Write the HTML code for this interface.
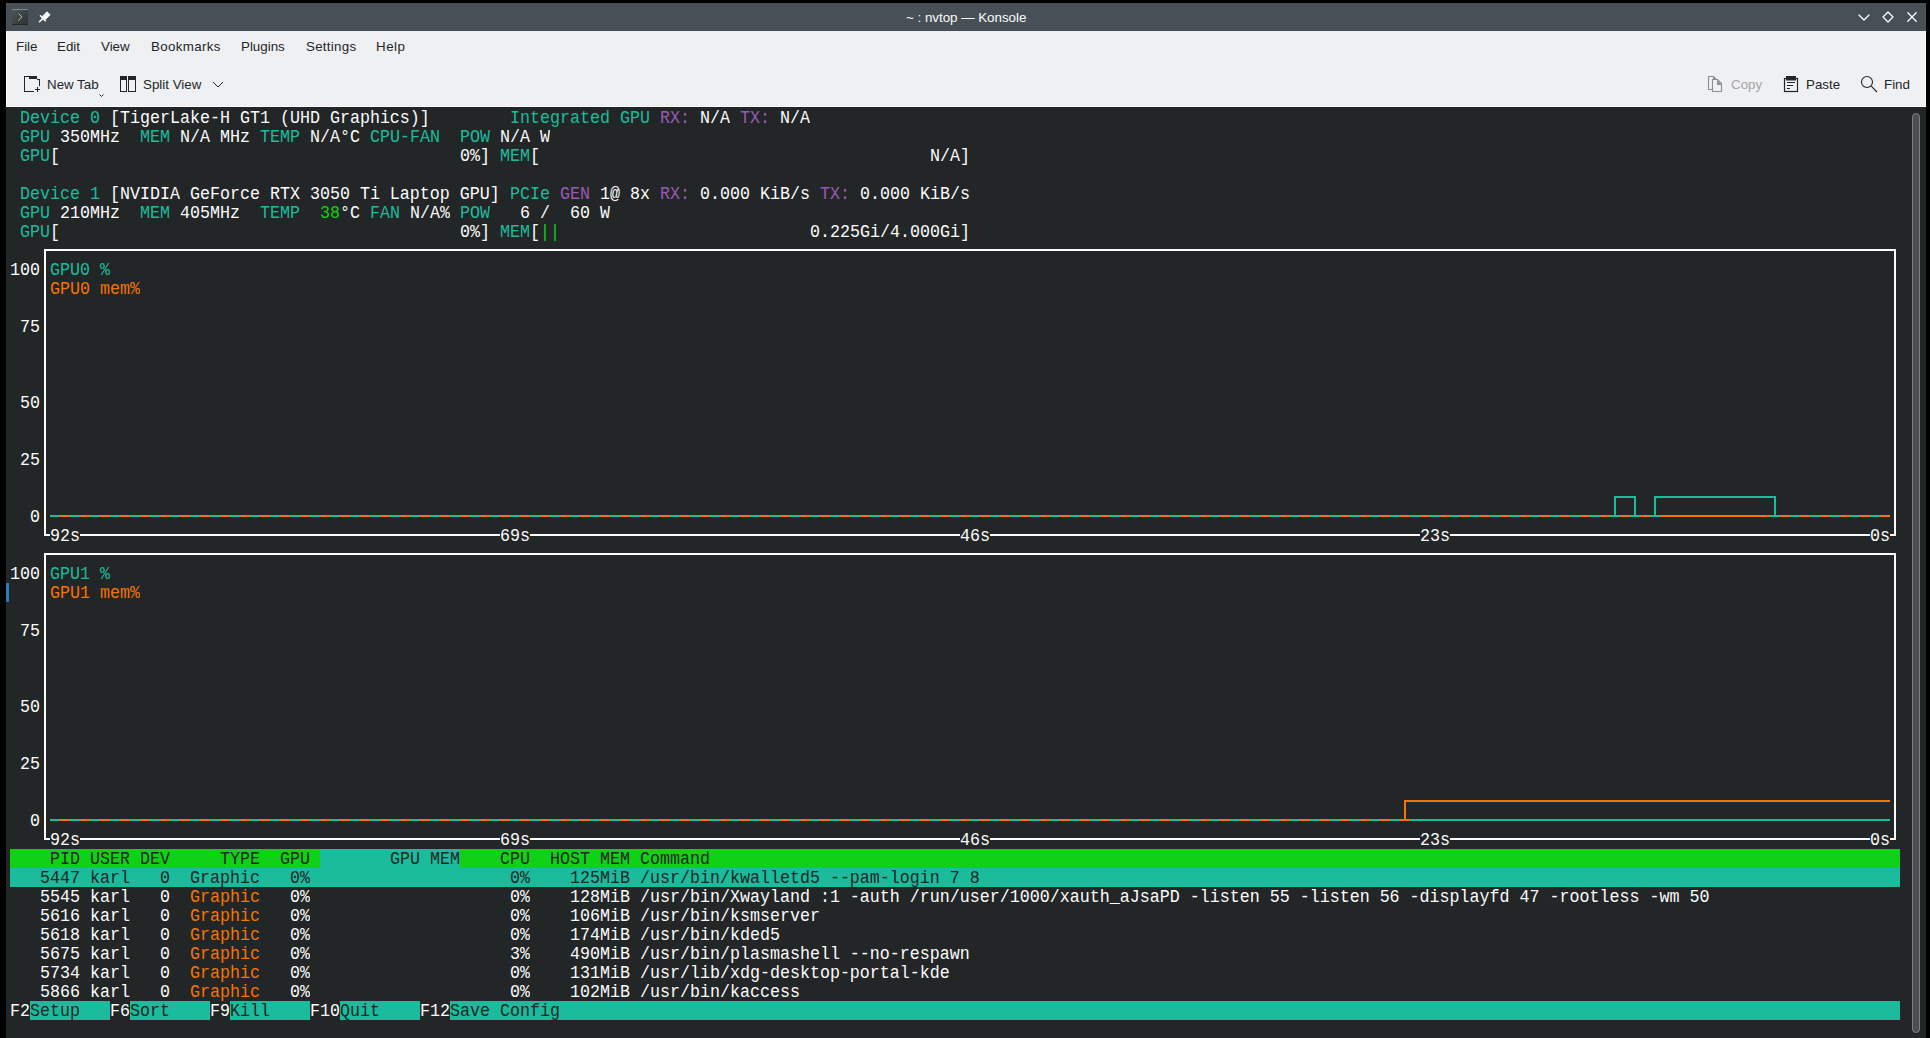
<!DOCTYPE html>
<html><head><meta charset="utf-8"><title>nvtop — Konsole</title>
<style>
html,body{margin:0;padding:0;}
body{width:1930px;height:1038px;overflow:hidden;background:#000;position:relative;font-family:"Liberation Sans",sans-serif;}
.b{position:absolute;}
.t{position:absolute;height:19px;font-family:"Liberation Mono",monospace;font-size:16.67px;line-height:19px;white-space:pre;transform:scaleY(1.09);transform-origin:0 3px;}
.ui{position:absolute;font-family:"Liberation Sans",sans-serif;font-size:13.33px;line-height:16px;white-space:pre;color:#232629;}
#title{position:absolute;left:6px;top:3px;width:1920px;height:28px;background:#475057;}
#bar{position:absolute;left:6px;top:31px;width:1920px;height:76px;background:#eff0f1;}
#term{position:absolute;left:6px;top:107px;width:1920px;height:931px;background:#232627;}
svg{position:absolute;overflow:visible;}
</style></head><body>
<div id="title"></div>
<div id="bar"></div>
<div id="term"></div>
<!-- title bar -->
<div class="ui" style="left:906px;top:10px;color:#fcfcfc;">~ : nvtop — Konsole</div>
<!-- menu -->
<div class="ui" style="left:16px;top:39px;">File</div>
<div class="ui" style="left:57px;top:39px;">Edit</div>
<div class="ui" style="left:101px;top:39px;">View</div>
<div class="ui" style="left:151px;top:39px;letter-spacing:0.35px;">Bookmarks</div>
<div class="ui" style="left:241px;top:39px;">Plugins</div>
<div class="ui" style="left:306px;top:39px;letter-spacing:0.28px;">Settings</div>
<div class="ui" style="left:376px;top:39px;letter-spacing:0.5px;">Help</div>
<!-- toolbar -->
<div class="ui" style="left:47px;top:77px;">New Tab</div>
<div class="ui" style="left:143px;top:77px;">Split View</div>
<div class="ui" style="left:1731px;top:77px;color:#a5a6a8;">Copy</div>
<div class="ui" style="left:1806px;top:77px;">Paste</div>
<div class="ui" style="left:1884px;top:77px;">Find</div>
<!-- highlights -->
<div class="b" style="left:6px;top:31px;width:1px;height:76px;background:#fcfcfc"></div>
<div class="b" style="left:1925px;top:31px;width:1px;height:76px;background:#fcfcfc"></div>
<div class="b" style="left:6px;top:106px;width:1920px;height:1px;background:#fcfcfc"></div>
<!-- konsole icon -->
<div class="b" style="left:12px;top:9px;width:16px;height:16px;background:linear-gradient(135deg,#4f5856,#2c3032)"></div>
<svg style="left:0;top:0" width="1930" height="110" viewBox="0 0 1930 110">
<rect x="12" y="9" width="16" height="1" fill="#7f8c8d"/>
<rect x="12" y="24" width="16" height="1" fill="#232627"/>
<path d="M18.5 13.5 L21.8 16.8 L18.5 20.5" fill="none" stroke="#b8c0c0" stroke-width="1"/>
<!-- pin -->
<path d="M42.5 16.3 L47 11.8 L50 14.8 L45.5 19.3 Z" fill="#fcfcfc" stroke="#fcfcfc" stroke-width="1" stroke-linejoin="round"/>
<path d="M40.5 15.8 L45.3 20.6" stroke="#fcfcfc" stroke-width="1.6" stroke-linecap="round"/>
<path d="M39.5 21.8 L43.2 18.1" stroke="#fcfcfc" stroke-width="1.5" stroke-linecap="round"/>
<!-- window buttons -->
<path d="M1859 15 L1864 20 L1869 15" fill="none" stroke="#fcfcfc" stroke-width="1.3" stroke-linecap="round"/>
<path d="M1888 12 L1893 17 L1888 22 L1883 17 Z" fill="none" stroke="#fcfcfc" stroke-width="1.3" stroke-linejoin="round"/>
<path d="M1907.8 12.8 L1916.2 21.2 M1916.2 12.8 L1907.8 21.2" fill="none" stroke="#fcfcfc" stroke-width="1.3" stroke-linecap="round"/>
<!-- new tab icon -->
<g fill="#232629">
<rect x="24" y="76" width="1" height="16"/><rect x="24" y="76" width="13" height="1"/>
<rect x="29" y="76" width="8" height="3"/><rect x="37" y="79" width="3" height="1"/><rect x="39" y="79" width="1" height="7"/>
<rect x="24" y="91" width="10" height="1"/>
<rect x="35" y="89" width="5" height="1"/><rect x="37" y="87" width="1" height="5"/>
</g>
<path d="M99.5 94.5 L101.5 96.5 L103.5 94.5" fill="none" stroke="#232629" stroke-width="1"/>
<!-- split view icon -->
<g fill="none" stroke="#232629" stroke-width="1">
<rect x="120.5" y="76.5" width="6" height="15"/><rect x="128.5" y="76.5" width="7" height="15"/>
</g>
<g fill="#232629"><rect x="120" y="76" width="7" height="4"/><rect x="128" y="76" width="8" height="4"/></g>
<path d="M213 82 L218 87 L223 82" fill="none" stroke="#232629" stroke-width="1"/>
<!-- copy icon (disabled) -->
<g fill="none" stroke="#8e8f90" stroke-width="1.1">
<path d="M1712 89.5 H1708.5 V76.5 H1713.5 L1716.5 79.5"/>
<path d="M1712.5 91.5 V79.5 H1717.5 L1721.5 83.5 V91.5 Z"/>
</g>
<path d="M1713 76 L1716.8 79.8 L1713 79.8 Z" fill="#8e8f90"/>
<path d="M1717 80 L1722 85 L1717 85 Z" fill="#8e8f90"/>
<!-- paste icon -->
<rect x="1784.5" y="78.5" width="13" height="13" fill="none" stroke="#232629" stroke-width="1.2"/>
<rect x="1786" y="76" width="10" height="4.5" fill="#232629"/>
<g fill="#232629"><rect x="1787" y="82" width="8" height="1"/><rect x="1787" y="85" width="6" height="1"/><rect x="1787" y="88" width="3" height="1"/></g>
<!-- find icon -->
<circle cx="1867" cy="82" r="5.5" fill="none" stroke="#232629" stroke-width="1.1"/>
<path d="M1871.2 86.2 L1877 92" stroke="#232629" stroke-width="1.1"/>
</svg>
<!-- scrollbar -->
<div class="b" style="left:1912px;top:113px;width:6px;height:918px;border:1px solid #7e8081;border-radius:4px;background:#4d4e51"></div>
<!-- blue marker -->
<div class="b" style="left:6px;top:583px;width:3px;height:19px;background:#2d7bbd"></div>
<div class="t" style="left:20px;top:108px;color:#1abc9c">Device 0</div><div class="t" style="left:110px;top:108px;color:#fcfcfc">[TigerLake-H GT1 (UHD Graphics)]</div><div class="t" style="left:510px;top:108px;color:#1abc9c">Integrated GPU</div><div class="t" style="left:660px;top:108px;color:#9b59b6">RX:</div><div class="t" style="left:700px;top:108px;color:#fcfcfc">N/A</div><div class="t" style="left:740px;top:108px;color:#9b59b6">TX:</div><div class="t" style="left:780px;top:108px;color:#fcfcfc">N/A</div><div class="t" style="left:20px;top:127px;color:#1abc9c">GPU</div><div class="t" style="left:60px;top:127px;color:#fcfcfc">350MHz</div><div class="t" style="left:140px;top:127px;color:#1abc9c">MEM</div><div class="t" style="left:180px;top:127px;color:#fcfcfc">N/A MHz</div><div class="t" style="left:260px;top:127px;color:#1abc9c">TEMP</div><div class="t" style="left:310px;top:127px;color:#fcfcfc">N/A°C</div><div class="t" style="left:370px;top:127px;color:#1abc9c">CPU-FAN</div><div class="t" style="left:460px;top:127px;color:#1abc9c">POW</div><div class="t" style="left:500px;top:127px;color:#fcfcfc">N/A W</div><div class="t" style="left:20px;top:146px;color:#1abc9c">GPU</div><div class="t" style="left:50px;top:146px;color:#fcfcfc">[</div><div class="t" style="left:460px;top:146px;color:#fcfcfc">0%]</div><div class="t" style="left:500px;top:146px;color:#1abc9c">MEM</div><div class="t" style="left:530px;top:146px;color:#fcfcfc">[</div><div class="t" style="left:930px;top:146px;color:#fcfcfc">N/A]</div><div class="t" style="left:20px;top:184px;color:#1abc9c">Device 1</div><div class="t" style="left:110px;top:184px;color:#fcfcfc">[NVIDIA GeForce RTX 3050 Ti Laptop GPU]</div><div class="t" style="left:510px;top:184px;color:#1abc9c">PCIe</div><div class="t" style="left:560px;top:184px;color:#9b59b6">GEN</div><div class="t" style="left:600px;top:184px;color:#fcfcfc">1@ 8x</div><div class="t" style="left:660px;top:184px;color:#9b59b6">RX:</div><div class="t" style="left:700px;top:184px;color:#fcfcfc">0.000 KiB/s</div><div class="t" style="left:820px;top:184px;color:#9b59b6">TX:</div><div class="t" style="left:860px;top:184px;color:#fcfcfc">0.000 KiB/s</div><div class="t" style="left:20px;top:203px;color:#1abc9c">GPU</div><div class="t" style="left:60px;top:203px;color:#fcfcfc">210MHz</div><div class="t" style="left:140px;top:203px;color:#1abc9c">MEM</div><div class="t" style="left:180px;top:203px;color:#fcfcfc">405MHz</div><div class="t" style="left:260px;top:203px;color:#1abc9c">TEMP</div><div class="t" style="left:320px;top:203px;color:#11d116">38</div><div class="t" style="left:340px;top:203px;color:#fcfcfc">°C</div><div class="t" style="left:370px;top:203px;color:#1abc9c">FAN</div><div class="t" style="left:410px;top:203px;color:#fcfcfc">N/A%</div><div class="t" style="left:460px;top:203px;color:#1abc9c">POW</div><div class="t" style="left:520px;top:203px;color:#fcfcfc">6 /  60 W</div><div class="t" style="left:20px;top:222px;color:#1abc9c">GPU</div><div class="t" style="left:50px;top:222px;color:#fcfcfc">[</div><div class="t" style="left:460px;top:222px;color:#fcfcfc">0%]</div><div class="t" style="left:500px;top:222px;color:#1abc9c">MEM</div><div class="t" style="left:530px;top:222px;color:#fcfcfc">[</div><div class="t" style="left:540px;top:222px;color:#11d116">||</div><div class="t" style="left:810px;top:222px;color:#fcfcfc">0.225Gi/4.000Gi]</div><div class="b" style="left:44px;top:249px;width:1852px;height:2px;background:#fcfcfc"></div><div class="b" style="left:44px;top:249px;width:2px;height:287px;background:#fcfcfc"></div><div class="b" style="left:1894px;top:249px;width:2px;height:287px;background:#fcfcfc"></div><div class="b" style="left:44px;top:534px;width:1852px;height:2px;background:#fcfcfc"></div><div class="b" style="left:50px;top:526px;width:30px;height:19px;background:#232627"></div><div class="t" style="left:50px;top:526px;color:#fcfcfc">92s</div><div class="b" style="left:500px;top:526px;width:30px;height:19px;background:#232627"></div><div class="t" style="left:500px;top:526px;color:#fcfcfc">69s</div><div class="b" style="left:960px;top:526px;width:30px;height:19px;background:#232627"></div><div class="t" style="left:960px;top:526px;color:#fcfcfc">46s</div><div class="b" style="left:1420px;top:526px;width:30px;height:19px;background:#232627"></div><div class="t" style="left:1420px;top:526px;color:#fcfcfc">23s</div><div class="b" style="left:1870px;top:526px;width:20px;height:19px;background:#232627"></div><div class="t" style="left:1870px;top:526px;color:#fcfcfc">0s</div><div class="t" style="left:10px;top:260px;color:#fcfcfc">100</div><div class="t" style="left:20px;top:317px;color:#fcfcfc">75</div><div class="t" style="left:20px;top:393px;color:#fcfcfc">50</div><div class="t" style="left:20px;top:450px;color:#fcfcfc">25</div><div class="t" style="left:30px;top:507px;color:#fcfcfc">0</div><div class="t" style="left:50px;top:260px;color:#1abc9c">GPU0 %</div><div class="t" style="left:50px;top:279px;color:#f67400">GPU0 mem%</div><div class="b" style="left:44px;top:553px;width:1852px;height:2px;background:#fcfcfc"></div><div class="b" style="left:44px;top:553px;width:2px;height:287px;background:#fcfcfc"></div><div class="b" style="left:1894px;top:553px;width:2px;height:287px;background:#fcfcfc"></div><div class="b" style="left:44px;top:838px;width:1852px;height:2px;background:#fcfcfc"></div><div class="b" style="left:50px;top:830px;width:30px;height:19px;background:#232627"></div><div class="t" style="left:50px;top:830px;color:#fcfcfc">92s</div><div class="b" style="left:500px;top:830px;width:30px;height:19px;background:#232627"></div><div class="t" style="left:500px;top:830px;color:#fcfcfc">69s</div><div class="b" style="left:960px;top:830px;width:30px;height:19px;background:#232627"></div><div class="t" style="left:960px;top:830px;color:#fcfcfc">46s</div><div class="b" style="left:1420px;top:830px;width:30px;height:19px;background:#232627"></div><div class="t" style="left:1420px;top:830px;color:#fcfcfc">23s</div><div class="b" style="left:1870px;top:830px;width:20px;height:19px;background:#232627"></div><div class="t" style="left:1870px;top:830px;color:#fcfcfc">0s</div><div class="t" style="left:10px;top:564px;color:#fcfcfc">100</div><div class="t" style="left:20px;top:621px;color:#fcfcfc">75</div><div class="t" style="left:20px;top:697px;color:#fcfcfc">50</div><div class="t" style="left:20px;top:754px;color:#fcfcfc">25</div><div class="t" style="left:30px;top:811px;color:#fcfcfc">0</div><div class="t" style="left:50px;top:564px;color:#1abc9c">GPU1 %</div><div class="t" style="left:50px;top:583px;color:#f67400">GPU1 mem%</div><div class="b" style="left:50px;top:515px;width:10px;height:2px;background:#1abc9c"></div><div class="b" style="left:60px;top:515px;width:10px;height:2px;background:#f67400"></div><div class="b" style="left:70px;top:515px;width:10px;height:2px;background:#1abc9c"></div><div class="b" style="left:80px;top:515px;width:10px;height:2px;background:#f67400"></div><div class="b" style="left:90px;top:515px;width:10px;height:2px;background:#1abc9c"></div><div class="b" style="left:100px;top:515px;width:10px;height:2px;background:#f67400"></div><div class="b" style="left:110px;top:515px;width:10px;height:2px;background:#1abc9c"></div><div class="b" style="left:120px;top:515px;width:10px;height:2px;background:#f67400"></div><div class="b" style="left:130px;top:515px;width:10px;height:2px;background:#1abc9c"></div><div class="b" style="left:140px;top:515px;width:10px;height:2px;background:#f67400"></div><div class="b" style="left:150px;top:515px;width:10px;height:2px;background:#1abc9c"></div><div class="b" style="left:160px;top:515px;width:10px;height:2px;background:#f67400"></div><div class="b" style="left:170px;top:515px;width:10px;height:2px;background:#1abc9c"></div><div class="b" style="left:180px;top:515px;width:10px;height:2px;background:#f67400"></div><div class="b" style="left:190px;top:515px;width:10px;height:2px;background:#1abc9c"></div><div class="b" style="left:200px;top:515px;width:10px;height:2px;background:#f67400"></div><div class="b" style="left:210px;top:515px;width:10px;height:2px;background:#1abc9c"></div><div class="b" style="left:220px;top:515px;width:10px;height:2px;background:#f67400"></div><div class="b" style="left:230px;top:515px;width:10px;height:2px;background:#1abc9c"></div><div class="b" style="left:240px;top:515px;width:10px;height:2px;background:#f67400"></div><div class="b" style="left:250px;top:515px;width:10px;height:2px;background:#1abc9c"></div><div class="b" style="left:260px;top:515px;width:10px;height:2px;background:#f67400"></div><div class="b" style="left:270px;top:515px;width:10px;height:2px;background:#1abc9c"></div><div class="b" style="left:280px;top:515px;width:10px;height:2px;background:#f67400"></div><div class="b" style="left:290px;top:515px;width:10px;height:2px;background:#1abc9c"></div><div class="b" style="left:300px;top:515px;width:10px;height:2px;background:#f67400"></div><div class="b" style="left:310px;top:515px;width:10px;height:2px;background:#1abc9c"></div><div class="b" style="left:320px;top:515px;width:10px;height:2px;background:#f67400"></div><div class="b" style="left:330px;top:515px;width:10px;height:2px;background:#1abc9c"></div><div class="b" style="left:340px;top:515px;width:10px;height:2px;background:#f67400"></div><div class="b" style="left:350px;top:515px;width:10px;height:2px;background:#1abc9c"></div><div class="b" style="left:360px;top:515px;width:10px;height:2px;background:#f67400"></div><div class="b" style="left:370px;top:515px;width:10px;height:2px;background:#1abc9c"></div><div class="b" style="left:380px;top:515px;width:10px;height:2px;background:#f67400"></div><div class="b" style="left:390px;top:515px;width:10px;height:2px;background:#1abc9c"></div><div class="b" style="left:400px;top:515px;width:10px;height:2px;background:#f67400"></div><div class="b" style="left:410px;top:515px;width:10px;height:2px;background:#1abc9c"></div><div class="b" style="left:420px;top:515px;width:10px;height:2px;background:#f67400"></div><div class="b" style="left:430px;top:515px;width:10px;height:2px;background:#1abc9c"></div><div class="b" style="left:440px;top:515px;width:10px;height:2px;background:#f67400"></div><div class="b" style="left:450px;top:515px;width:10px;height:2px;background:#1abc9c"></div><div class="b" style="left:460px;top:515px;width:10px;height:2px;background:#f67400"></div><div class="b" style="left:470px;top:515px;width:10px;height:2px;background:#1abc9c"></div><div class="b" style="left:480px;top:515px;width:10px;height:2px;background:#f67400"></div><div class="b" style="left:490px;top:515px;width:10px;height:2px;background:#1abc9c"></div><div class="b" style="left:500px;top:515px;width:10px;height:2px;background:#f67400"></div><div class="b" style="left:510px;top:515px;width:10px;height:2px;background:#1abc9c"></div><div class="b" style="left:520px;top:515px;width:10px;height:2px;background:#f67400"></div><div class="b" style="left:530px;top:515px;width:10px;height:2px;background:#1abc9c"></div><div class="b" style="left:540px;top:515px;width:10px;height:2px;background:#f67400"></div><div class="b" style="left:550px;top:515px;width:10px;height:2px;background:#1abc9c"></div><div class="b" style="left:560px;top:515px;width:10px;height:2px;background:#f67400"></div><div class="b" style="left:570px;top:515px;width:10px;height:2px;background:#1abc9c"></div><div class="b" style="left:580px;top:515px;width:10px;height:2px;background:#f67400"></div><div class="b" style="left:590px;top:515px;width:10px;height:2px;background:#1abc9c"></div><div class="b" style="left:600px;top:515px;width:10px;height:2px;background:#f67400"></div><div class="b" style="left:610px;top:515px;width:10px;height:2px;background:#1abc9c"></div><div class="b" style="left:620px;top:515px;width:10px;height:2px;background:#f67400"></div><div class="b" style="left:630px;top:515px;width:10px;height:2px;background:#1abc9c"></div><div class="b" style="left:640px;top:515px;width:10px;height:2px;background:#f67400"></div><div class="b" style="left:650px;top:515px;width:10px;height:2px;background:#1abc9c"></div><div class="b" style="left:660px;top:515px;width:10px;height:2px;background:#f67400"></div><div class="b" style="left:670px;top:515px;width:10px;height:2px;background:#1abc9c"></div><div class="b" style="left:680px;top:515px;width:10px;height:2px;background:#f67400"></div><div class="b" style="left:690px;top:515px;width:10px;height:2px;background:#1abc9c"></div><div class="b" style="left:700px;top:515px;width:10px;height:2px;background:#f67400"></div><div class="b" style="left:710px;top:515px;width:10px;height:2px;background:#1abc9c"></div><div class="b" style="left:720px;top:515px;width:10px;height:2px;background:#f67400"></div><div class="b" style="left:730px;top:515px;width:10px;height:2px;background:#1abc9c"></div><div class="b" style="left:740px;top:515px;width:10px;height:2px;background:#f67400"></div><div class="b" style="left:750px;top:515px;width:10px;height:2px;background:#1abc9c"></div><div class="b" style="left:760px;top:515px;width:10px;height:2px;background:#f67400"></div><div class="b" style="left:770px;top:515px;width:10px;height:2px;background:#1abc9c"></div><div class="b" style="left:780px;top:515px;width:10px;height:2px;background:#f67400"></div><div class="b" style="left:790px;top:515px;width:10px;height:2px;background:#1abc9c"></div><div class="b" style="left:800px;top:515px;width:10px;height:2px;background:#f67400"></div><div class="b" style="left:810px;top:515px;width:10px;height:2px;background:#1abc9c"></div><div class="b" style="left:820px;top:515px;width:10px;height:2px;background:#f67400"></div><div class="b" style="left:830px;top:515px;width:10px;height:2px;background:#1abc9c"></div><div class="b" style="left:840px;top:515px;width:10px;height:2px;background:#f67400"></div><div class="b" style="left:850px;top:515px;width:10px;height:2px;background:#1abc9c"></div><div class="b" style="left:860px;top:515px;width:10px;height:2px;background:#f67400"></div><div class="b" style="left:870px;top:515px;width:10px;height:2px;background:#1abc9c"></div><div class="b" style="left:880px;top:515px;width:10px;height:2px;background:#f67400"></div><div class="b" style="left:890px;top:515px;width:10px;height:2px;background:#1abc9c"></div><div class="b" style="left:900px;top:515px;width:10px;height:2px;background:#f67400"></div><div class="b" style="left:910px;top:515px;width:10px;height:2px;background:#1abc9c"></div><div class="b" style="left:920px;top:515px;width:10px;height:2px;background:#f67400"></div><div class="b" style="left:930px;top:515px;width:10px;height:2px;background:#1abc9c"></div><div class="b" style="left:940px;top:515px;width:10px;height:2px;background:#f67400"></div><div class="b" style="left:950px;top:515px;width:10px;height:2px;background:#1abc9c"></div><div class="b" style="left:960px;top:515px;width:10px;height:2px;background:#f67400"></div><div class="b" style="left:970px;top:515px;width:10px;height:2px;background:#1abc9c"></div><div class="b" style="left:980px;top:515px;width:10px;height:2px;background:#f67400"></div><div class="b" style="left:990px;top:515px;width:10px;height:2px;background:#1abc9c"></div><div class="b" style="left:1000px;top:515px;width:10px;height:2px;background:#f67400"></div><div class="b" style="left:1010px;top:515px;width:10px;height:2px;background:#1abc9c"></div><div class="b" style="left:1020px;top:515px;width:10px;height:2px;background:#f67400"></div><div class="b" style="left:1030px;top:515px;width:10px;height:2px;background:#1abc9c"></div><div class="b" style="left:1040px;top:515px;width:10px;height:2px;background:#f67400"></div><div class="b" style="left:1050px;top:515px;width:10px;height:2px;background:#1abc9c"></div><div class="b" style="left:1060px;top:515px;width:10px;height:2px;background:#f67400"></div><div class="b" style="left:1070px;top:515px;width:10px;height:2px;background:#1abc9c"></div><div class="b" style="left:1080px;top:515px;width:10px;height:2px;background:#f67400"></div><div class="b" style="left:1090px;top:515px;width:10px;height:2px;background:#1abc9c"></div><div class="b" style="left:1100px;top:515px;width:10px;height:2px;background:#f67400"></div><div class="b" style="left:1110px;top:515px;width:10px;height:2px;background:#1abc9c"></div><div class="b" style="left:1120px;top:515px;width:10px;height:2px;background:#f67400"></div><div class="b" style="left:1130px;top:515px;width:10px;height:2px;background:#1abc9c"></div><div class="b" style="left:1140px;top:515px;width:10px;height:2px;background:#f67400"></div><div class="b" style="left:1150px;top:515px;width:10px;height:2px;background:#1abc9c"></div><div class="b" style="left:1160px;top:515px;width:10px;height:2px;background:#f67400"></div><div class="b" style="left:1170px;top:515px;width:10px;height:2px;background:#1abc9c"></div><div class="b" style="left:1180px;top:515px;width:10px;height:2px;background:#f67400"></div><div class="b" style="left:1190px;top:515px;width:10px;height:2px;background:#1abc9c"></div><div class="b" style="left:1200px;top:515px;width:10px;height:2px;background:#f67400"></div><div class="b" style="left:1210px;top:515px;width:10px;height:2px;background:#1abc9c"></div><div class="b" style="left:1220px;top:515px;width:10px;height:2px;background:#f67400"></div><div class="b" style="left:1230px;top:515px;width:10px;height:2px;background:#1abc9c"></div><div class="b" style="left:1240px;top:515px;width:10px;height:2px;background:#f67400"></div><div class="b" style="left:1250px;top:515px;width:10px;height:2px;background:#1abc9c"></div><div class="b" style="left:1260px;top:515px;width:10px;height:2px;background:#f67400"></div><div class="b" style="left:1270px;top:515px;width:10px;height:2px;background:#1abc9c"></div><div class="b" style="left:1280px;top:515px;width:10px;height:2px;background:#f67400"></div><div class="b" style="left:1290px;top:515px;width:10px;height:2px;background:#1abc9c"></div><div class="b" style="left:1300px;top:515px;width:10px;height:2px;background:#f67400"></div><div class="b" style="left:1310px;top:515px;width:10px;height:2px;background:#1abc9c"></div><div class="b" style="left:1320px;top:515px;width:10px;height:2px;background:#f67400"></div><div class="b" style="left:1330px;top:515px;width:10px;height:2px;background:#1abc9c"></div><div class="b" style="left:1340px;top:515px;width:10px;height:2px;background:#f67400"></div><div class="b" style="left:1350px;top:515px;width:10px;height:2px;background:#1abc9c"></div><div class="b" style="left:1360px;top:515px;width:10px;height:2px;background:#f67400"></div><div class="b" style="left:1370px;top:515px;width:10px;height:2px;background:#1abc9c"></div><div class="b" style="left:1380px;top:515px;width:10px;height:2px;background:#f67400"></div><div class="b" style="left:1390px;top:515px;width:10px;height:2px;background:#1abc9c"></div><div class="b" style="left:1400px;top:515px;width:10px;height:2px;background:#f67400"></div><div class="b" style="left:1410px;top:515px;width:10px;height:2px;background:#1abc9c"></div><div class="b" style="left:1420px;top:515px;width:10px;height:2px;background:#f67400"></div><div class="b" style="left:1430px;top:515px;width:10px;height:2px;background:#1abc9c"></div><div class="b" style="left:1440px;top:515px;width:10px;height:2px;background:#f67400"></div><div class="b" style="left:1450px;top:515px;width:10px;height:2px;background:#1abc9c"></div><div class="b" style="left:1460px;top:515px;width:10px;height:2px;background:#f67400"></div><div class="b" style="left:1470px;top:515px;width:10px;height:2px;background:#1abc9c"></div><div class="b" style="left:1480px;top:515px;width:10px;height:2px;background:#f67400"></div><div class="b" style="left:1490px;top:515px;width:10px;height:2px;background:#1abc9c"></div><div class="b" style="left:1500px;top:515px;width:10px;height:2px;background:#f67400"></div><div class="b" style="left:1510px;top:515px;width:10px;height:2px;background:#1abc9c"></div><div class="b" style="left:1520px;top:515px;width:10px;height:2px;background:#f67400"></div><div class="b" style="left:1530px;top:515px;width:10px;height:2px;background:#1abc9c"></div><div class="b" style="left:1540px;top:515px;width:10px;height:2px;background:#f67400"></div><div class="b" style="left:1550px;top:515px;width:10px;height:2px;background:#1abc9c"></div><div class="b" style="left:1560px;top:515px;width:10px;height:2px;background:#f67400"></div><div class="b" style="left:1570px;top:515px;width:10px;height:2px;background:#1abc9c"></div><div class="b" style="left:1580px;top:515px;width:10px;height:2px;background:#f67400"></div><div class="b" style="left:1590px;top:515px;width:10px;height:2px;background:#1abc9c"></div><div class="b" style="left:1600px;top:515px;width:10px;height:2px;background:#f67400"></div><div class="b" style="left:1610px;top:515px;width:10px;height:2px;background:#1abc9c"></div><div class="b" style="left:1620px;top:515px;width:10px;height:2px;background:#f67400"></div><div class="b" style="left:1630px;top:515px;width:10px;height:2px;background:#1abc9c"></div><div class="b" style="left:1640px;top:515px;width:10px;height:2px;background:#f67400"></div><div class="b" style="left:1650px;top:515px;width:10px;height:2px;background:#1abc9c"></div><div class="b" style="left:1660px;top:515px;width:110px;height:2px;background:#f67400"></div><div class="b" style="left:1770px;top:515px;width:10px;height:2px;background:#1abc9c"></div><div class="b" style="left:1780px;top:515px;width:10px;height:2px;background:#f67400"></div><div class="b" style="left:1790px;top:515px;width:10px;height:2px;background:#1abc9c"></div><div class="b" style="left:1800px;top:515px;width:10px;height:2px;background:#f67400"></div><div class="b" style="left:1810px;top:515px;width:10px;height:2px;background:#1abc9c"></div><div class="b" style="left:1820px;top:515px;width:10px;height:2px;background:#f67400"></div><div class="b" style="left:1830px;top:515px;width:10px;height:2px;background:#1abc9c"></div><div class="b" style="left:1840px;top:515px;width:10px;height:2px;background:#f67400"></div><div class="b" style="left:1850px;top:515px;width:10px;height:2px;background:#1abc9c"></div><div class="b" style="left:1860px;top:515px;width:10px;height:2px;background:#f67400"></div><div class="b" style="left:1870px;top:515px;width:10px;height:2px;background:#1abc9c"></div><div class="b" style="left:1880px;top:515px;width:10px;height:2px;background:#f67400"></div><div class="b" style="left:1614px;top:496px;width:22px;height:2px;background:#1abc9c"></div><div class="b" style="left:1614px;top:496px;width:2px;height:21px;background:#1abc9c"></div><div class="b" style="left:1634px;top:496px;width:2px;height:21px;background:#1abc9c"></div><div class="b" style="left:1654px;top:496px;width:122px;height:2px;background:#1abc9c"></div><div class="b" style="left:1654px;top:496px;width:2px;height:21px;background:#1abc9c"></div><div class="b" style="left:1774px;top:496px;width:2px;height:21px;background:#1abc9c"></div><div class="b" style="left:50px;top:819px;width:10px;height:2px;background:#1abc9c"></div><div class="b" style="left:60px;top:819px;width:10px;height:2px;background:#f67400"></div><div class="b" style="left:70px;top:819px;width:10px;height:2px;background:#1abc9c"></div><div class="b" style="left:80px;top:819px;width:10px;height:2px;background:#f67400"></div><div class="b" style="left:90px;top:819px;width:10px;height:2px;background:#1abc9c"></div><div class="b" style="left:100px;top:819px;width:10px;height:2px;background:#f67400"></div><div class="b" style="left:110px;top:819px;width:10px;height:2px;background:#1abc9c"></div><div class="b" style="left:120px;top:819px;width:10px;height:2px;background:#f67400"></div><div class="b" style="left:130px;top:819px;width:10px;height:2px;background:#1abc9c"></div><div class="b" style="left:140px;top:819px;width:10px;height:2px;background:#f67400"></div><div class="b" style="left:150px;top:819px;width:10px;height:2px;background:#1abc9c"></div><div class="b" style="left:160px;top:819px;width:10px;height:2px;background:#f67400"></div><div class="b" style="left:170px;top:819px;width:10px;height:2px;background:#1abc9c"></div><div class="b" style="left:180px;top:819px;width:10px;height:2px;background:#f67400"></div><div class="b" style="left:190px;top:819px;width:10px;height:2px;background:#1abc9c"></div><div class="b" style="left:200px;top:819px;width:10px;height:2px;background:#f67400"></div><div class="b" style="left:210px;top:819px;width:10px;height:2px;background:#1abc9c"></div><div class="b" style="left:220px;top:819px;width:10px;height:2px;background:#f67400"></div><div class="b" style="left:230px;top:819px;width:10px;height:2px;background:#1abc9c"></div><div class="b" style="left:240px;top:819px;width:10px;height:2px;background:#f67400"></div><div class="b" style="left:250px;top:819px;width:10px;height:2px;background:#1abc9c"></div><div class="b" style="left:260px;top:819px;width:10px;height:2px;background:#f67400"></div><div class="b" style="left:270px;top:819px;width:10px;height:2px;background:#1abc9c"></div><div class="b" style="left:280px;top:819px;width:10px;height:2px;background:#f67400"></div><div class="b" style="left:290px;top:819px;width:10px;height:2px;background:#1abc9c"></div><div class="b" style="left:300px;top:819px;width:10px;height:2px;background:#f67400"></div><div class="b" style="left:310px;top:819px;width:10px;height:2px;background:#1abc9c"></div><div class="b" style="left:320px;top:819px;width:10px;height:2px;background:#f67400"></div><div class="b" style="left:330px;top:819px;width:10px;height:2px;background:#1abc9c"></div><div class="b" style="left:340px;top:819px;width:10px;height:2px;background:#f67400"></div><div class="b" style="left:350px;top:819px;width:10px;height:2px;background:#1abc9c"></div><div class="b" style="left:360px;top:819px;width:10px;height:2px;background:#f67400"></div><div class="b" style="left:370px;top:819px;width:10px;height:2px;background:#1abc9c"></div><div class="b" style="left:380px;top:819px;width:10px;height:2px;background:#f67400"></div><div class="b" style="left:390px;top:819px;width:10px;height:2px;background:#1abc9c"></div><div class="b" style="left:400px;top:819px;width:10px;height:2px;background:#f67400"></div><div class="b" style="left:410px;top:819px;width:10px;height:2px;background:#1abc9c"></div><div class="b" style="left:420px;top:819px;width:10px;height:2px;background:#f67400"></div><div class="b" style="left:430px;top:819px;width:10px;height:2px;background:#1abc9c"></div><div class="b" style="left:440px;top:819px;width:10px;height:2px;background:#f67400"></div><div class="b" style="left:450px;top:819px;width:10px;height:2px;background:#1abc9c"></div><div class="b" style="left:460px;top:819px;width:10px;height:2px;background:#f67400"></div><div class="b" style="left:470px;top:819px;width:10px;height:2px;background:#1abc9c"></div><div class="b" style="left:480px;top:819px;width:10px;height:2px;background:#f67400"></div><div class="b" style="left:490px;top:819px;width:10px;height:2px;background:#1abc9c"></div><div class="b" style="left:500px;top:819px;width:10px;height:2px;background:#f67400"></div><div class="b" style="left:510px;top:819px;width:10px;height:2px;background:#1abc9c"></div><div class="b" style="left:520px;top:819px;width:10px;height:2px;background:#f67400"></div><div class="b" style="left:530px;top:819px;width:10px;height:2px;background:#1abc9c"></div><div class="b" style="left:540px;top:819px;width:10px;height:2px;background:#f67400"></div><div class="b" style="left:550px;top:819px;width:10px;height:2px;background:#1abc9c"></div><div class="b" style="left:560px;top:819px;width:10px;height:2px;background:#f67400"></div><div class="b" style="left:570px;top:819px;width:10px;height:2px;background:#1abc9c"></div><div class="b" style="left:580px;top:819px;width:10px;height:2px;background:#f67400"></div><div class="b" style="left:590px;top:819px;width:10px;height:2px;background:#1abc9c"></div><div class="b" style="left:600px;top:819px;width:10px;height:2px;background:#f67400"></div><div class="b" style="left:610px;top:819px;width:10px;height:2px;background:#1abc9c"></div><div class="b" style="left:620px;top:819px;width:10px;height:2px;background:#f67400"></div><div class="b" style="left:630px;top:819px;width:10px;height:2px;background:#1abc9c"></div><div class="b" style="left:640px;top:819px;width:10px;height:2px;background:#f67400"></div><div class="b" style="left:650px;top:819px;width:10px;height:2px;background:#1abc9c"></div><div class="b" style="left:660px;top:819px;width:10px;height:2px;background:#f67400"></div><div class="b" style="left:670px;top:819px;width:10px;height:2px;background:#1abc9c"></div><div class="b" style="left:680px;top:819px;width:10px;height:2px;background:#f67400"></div><div class="b" style="left:690px;top:819px;width:10px;height:2px;background:#1abc9c"></div><div class="b" style="left:700px;top:819px;width:10px;height:2px;background:#f67400"></div><div class="b" style="left:710px;top:819px;width:10px;height:2px;background:#1abc9c"></div><div class="b" style="left:720px;top:819px;width:10px;height:2px;background:#f67400"></div><div class="b" style="left:730px;top:819px;width:10px;height:2px;background:#1abc9c"></div><div class="b" style="left:740px;top:819px;width:10px;height:2px;background:#f67400"></div><div class="b" style="left:750px;top:819px;width:10px;height:2px;background:#1abc9c"></div><div class="b" style="left:760px;top:819px;width:10px;height:2px;background:#f67400"></div><div class="b" style="left:770px;top:819px;width:10px;height:2px;background:#1abc9c"></div><div class="b" style="left:780px;top:819px;width:10px;height:2px;background:#f67400"></div><div class="b" style="left:790px;top:819px;width:10px;height:2px;background:#1abc9c"></div><div class="b" style="left:800px;top:819px;width:10px;height:2px;background:#f67400"></div><div class="b" style="left:810px;top:819px;width:10px;height:2px;background:#1abc9c"></div><div class="b" style="left:820px;top:819px;width:10px;height:2px;background:#f67400"></div><div class="b" style="left:830px;top:819px;width:10px;height:2px;background:#1abc9c"></div><div class="b" style="left:840px;top:819px;width:10px;height:2px;background:#f67400"></div><div class="b" style="left:850px;top:819px;width:10px;height:2px;background:#1abc9c"></div><div class="b" style="left:860px;top:819px;width:10px;height:2px;background:#f67400"></div><div class="b" style="left:870px;top:819px;width:10px;height:2px;background:#1abc9c"></div><div class="b" style="left:880px;top:819px;width:10px;height:2px;background:#f67400"></div><div class="b" style="left:890px;top:819px;width:10px;height:2px;background:#1abc9c"></div><div class="b" style="left:900px;top:819px;width:10px;height:2px;background:#f67400"></div><div class="b" style="left:910px;top:819px;width:10px;height:2px;background:#1abc9c"></div><div class="b" style="left:920px;top:819px;width:10px;height:2px;background:#f67400"></div><div class="b" style="left:930px;top:819px;width:10px;height:2px;background:#1abc9c"></div><div class="b" style="left:940px;top:819px;width:10px;height:2px;background:#f67400"></div><div class="b" style="left:950px;top:819px;width:10px;height:2px;background:#1abc9c"></div><div class="b" style="left:960px;top:819px;width:10px;height:2px;background:#f67400"></div><div class="b" style="left:970px;top:819px;width:10px;height:2px;background:#1abc9c"></div><div class="b" style="left:980px;top:819px;width:10px;height:2px;background:#f67400"></div><div class="b" style="left:990px;top:819px;width:10px;height:2px;background:#1abc9c"></div><div class="b" style="left:1000px;top:819px;width:10px;height:2px;background:#f67400"></div><div class="b" style="left:1010px;top:819px;width:10px;height:2px;background:#1abc9c"></div><div class="b" style="left:1020px;top:819px;width:10px;height:2px;background:#f67400"></div><div class="b" style="left:1030px;top:819px;width:10px;height:2px;background:#1abc9c"></div><div class="b" style="left:1040px;top:819px;width:10px;height:2px;background:#f67400"></div><div class="b" style="left:1050px;top:819px;width:10px;height:2px;background:#1abc9c"></div><div class="b" style="left:1060px;top:819px;width:10px;height:2px;background:#f67400"></div><div class="b" style="left:1070px;top:819px;width:10px;height:2px;background:#1abc9c"></div><div class="b" style="left:1080px;top:819px;width:10px;height:2px;background:#f67400"></div><div class="b" style="left:1090px;top:819px;width:10px;height:2px;background:#1abc9c"></div><div class="b" style="left:1100px;top:819px;width:10px;height:2px;background:#f67400"></div><div class="b" style="left:1110px;top:819px;width:10px;height:2px;background:#1abc9c"></div><div class="b" style="left:1120px;top:819px;width:10px;height:2px;background:#f67400"></div><div class="b" style="left:1130px;top:819px;width:10px;height:2px;background:#1abc9c"></div><div class="b" style="left:1140px;top:819px;width:10px;height:2px;background:#f67400"></div><div class="b" style="left:1150px;top:819px;width:10px;height:2px;background:#1abc9c"></div><div class="b" style="left:1160px;top:819px;width:10px;height:2px;background:#f67400"></div><div class="b" style="left:1170px;top:819px;width:10px;height:2px;background:#1abc9c"></div><div class="b" style="left:1180px;top:819px;width:10px;height:2px;background:#f67400"></div><div class="b" style="left:1190px;top:819px;width:10px;height:2px;background:#1abc9c"></div><div class="b" style="left:1200px;top:819px;width:10px;height:2px;background:#f67400"></div><div class="b" style="left:1210px;top:819px;width:10px;height:2px;background:#1abc9c"></div><div class="b" style="left:1220px;top:819px;width:10px;height:2px;background:#f67400"></div><div class="b" style="left:1230px;top:819px;width:10px;height:2px;background:#1abc9c"></div><div class="b" style="left:1240px;top:819px;width:10px;height:2px;background:#f67400"></div><div class="b" style="left:1250px;top:819px;width:10px;height:2px;background:#1abc9c"></div><div class="b" style="left:1260px;top:819px;width:10px;height:2px;background:#f67400"></div><div class="b" style="left:1270px;top:819px;width:10px;height:2px;background:#1abc9c"></div><div class="b" style="left:1280px;top:819px;width:10px;height:2px;background:#f67400"></div><div class="b" style="left:1290px;top:819px;width:10px;height:2px;background:#1abc9c"></div><div class="b" style="left:1300px;top:819px;width:10px;height:2px;background:#f67400"></div><div class="b" style="left:1310px;top:819px;width:10px;height:2px;background:#1abc9c"></div><div class="b" style="left:1320px;top:819px;width:10px;height:2px;background:#f67400"></div><div class="b" style="left:1330px;top:819px;width:10px;height:2px;background:#1abc9c"></div><div class="b" style="left:1340px;top:819px;width:10px;height:2px;background:#f67400"></div><div class="b" style="left:1350px;top:819px;width:10px;height:2px;background:#1abc9c"></div><div class="b" style="left:1360px;top:819px;width:10px;height:2px;background:#f67400"></div><div class="b" style="left:1370px;top:819px;width:10px;height:2px;background:#1abc9c"></div><div class="b" style="left:1380px;top:819px;width:10px;height:2px;background:#f67400"></div><div class="b" style="left:1390px;top:819px;width:10px;height:2px;background:#1abc9c"></div><div class="b" style="left:1400px;top:819px;width:10px;height:2px;background:#f67400"></div><div class="b" style="left:1410px;top:819px;width:480px;height:2px;background:#1abc9c"></div><div class="b" style="left:1404px;top:800px;width:486px;height:2px;background:#f67400"></div><div class="b" style="left:1404px;top:800px;width:2px;height:21px;background:#f67400"></div><div class="b" style="left:10px;top:849px;width:310px;height:19px;background:#11d116"></div><div class="b" style="left:320px;top:849px;width:140px;height:19px;background:#1abc9c"></div><div class="b" style="left:460px;top:849px;width:1440px;height:19px;background:#11d116"></div><div class="t" style="left:50px;top:849px;color:#232627">PID USER DEV     TYPE  GPU</div><div class="t" style="left:390px;top:849px;color:#232627">GPU MEM</div><div class="t" style="left:500px;top:849px;color:#232627">CPU  HOST MEM Command</div><div class="b" style="left:10px;top:868px;width:1890px;height:19px;background:#1abc9c"></div><div class="t" style="left:40px;top:868px;color:#232627">5447 karl   0</div><div class="t" style="left:190px;top:868px;color:#232627">Graphic</div><div class="t" style="left:290px;top:868px;color:#232627">0%</div><div class="t" style="left:510px;top:868px;color:#232627">0%</div><div class="t" style="left:570px;top:868px;color:#232627">125MiB /usr/bin/kwalletd5 --pam-login 7 8</div><div class="t" style="left:40px;top:887px;color:#fcfcfc">5545 karl   0</div><div class="t" style="left:190px;top:887px;color:#f67400">Graphic</div><div class="t" style="left:290px;top:887px;color:#fcfcfc">0%</div><div class="t" style="left:510px;top:887px;color:#fcfcfc">0%</div><div class="t" style="left:570px;top:887px;color:#fcfcfc">128MiB /usr/bin/Xwayland :1 -auth /run/user/1000/xauth_aJsaPD -listen 55 -listen 56 -displayfd 47 -rootless -wm 50</div><div class="t" style="left:40px;top:906px;color:#fcfcfc">5616 karl   0</div><div class="t" style="left:190px;top:906px;color:#f67400">Graphic</div><div class="t" style="left:290px;top:906px;color:#fcfcfc">0%</div><div class="t" style="left:510px;top:906px;color:#fcfcfc">0%</div><div class="t" style="left:570px;top:906px;color:#fcfcfc">106MiB /usr/bin/ksmserver</div><div class="t" style="left:40px;top:925px;color:#fcfcfc">5618 karl   0</div><div class="t" style="left:190px;top:925px;color:#f67400">Graphic</div><div class="t" style="left:290px;top:925px;color:#fcfcfc">0%</div><div class="t" style="left:510px;top:925px;color:#fcfcfc">0%</div><div class="t" style="left:570px;top:925px;color:#fcfcfc">174MiB /usr/bin/kded5</div><div class="t" style="left:40px;top:944px;color:#fcfcfc">5675 karl   0</div><div class="t" style="left:190px;top:944px;color:#f67400">Graphic</div><div class="t" style="left:290px;top:944px;color:#fcfcfc">0%</div><div class="t" style="left:510px;top:944px;color:#fcfcfc">3%</div><div class="t" style="left:570px;top:944px;color:#fcfcfc">490MiB /usr/bin/plasmashell --no-respawn</div><div class="t" style="left:40px;top:963px;color:#fcfcfc">5734 karl   0</div><div class="t" style="left:190px;top:963px;color:#f67400">Graphic</div><div class="t" style="left:290px;top:963px;color:#fcfcfc">0%</div><div class="t" style="left:510px;top:963px;color:#fcfcfc">0%</div><div class="t" style="left:570px;top:963px;color:#fcfcfc">131MiB /usr/lib/xdg-desktop-portal-kde</div><div class="t" style="left:40px;top:982px;color:#fcfcfc">5866 karl   0</div><div class="t" style="left:190px;top:982px;color:#f67400">Graphic</div><div class="t" style="left:290px;top:982px;color:#fcfcfc">0%</div><div class="t" style="left:510px;top:982px;color:#fcfcfc">0%</div><div class="t" style="left:570px;top:982px;color:#fcfcfc">102MiB /usr/bin/kaccess</div><div class="t" style="left:10px;top:1001px;color:#fcfcfc">F2</div><div class="b" style="left:30px;top:1001px;width:80px;height:19px;background:#1abc9c"></div><div class="t" style="left:30px;top:1001px;color:#232627">Setup</div><div class="t" style="left:110px;top:1001px;color:#fcfcfc">F6</div><div class="b" style="left:130px;top:1001px;width:80px;height:19px;background:#1abc9c"></div><div class="t" style="left:130px;top:1001px;color:#232627">Sort</div><div class="t" style="left:210px;top:1001px;color:#fcfcfc">F9</div><div class="b" style="left:230px;top:1001px;width:80px;height:19px;background:#1abc9c"></div><div class="t" style="left:230px;top:1001px;color:#232627">Kill</div><div class="t" style="left:310px;top:1001px;color:#fcfcfc">F10</div><div class="b" style="left:340px;top:1001px;width:80px;height:19px;background:#1abc9c"></div><div class="t" style="left:340px;top:1001px;color:#232627">Quit</div><div class="t" style="left:420px;top:1001px;color:#fcfcfc">F12</div><div class="b" style="left:450px;top:1001px;width:1450px;height:19px;background:#1abc9c"></div><div class="t" style="left:450px;top:1001px;color:#232627">Save Config</div>
</body></html>
